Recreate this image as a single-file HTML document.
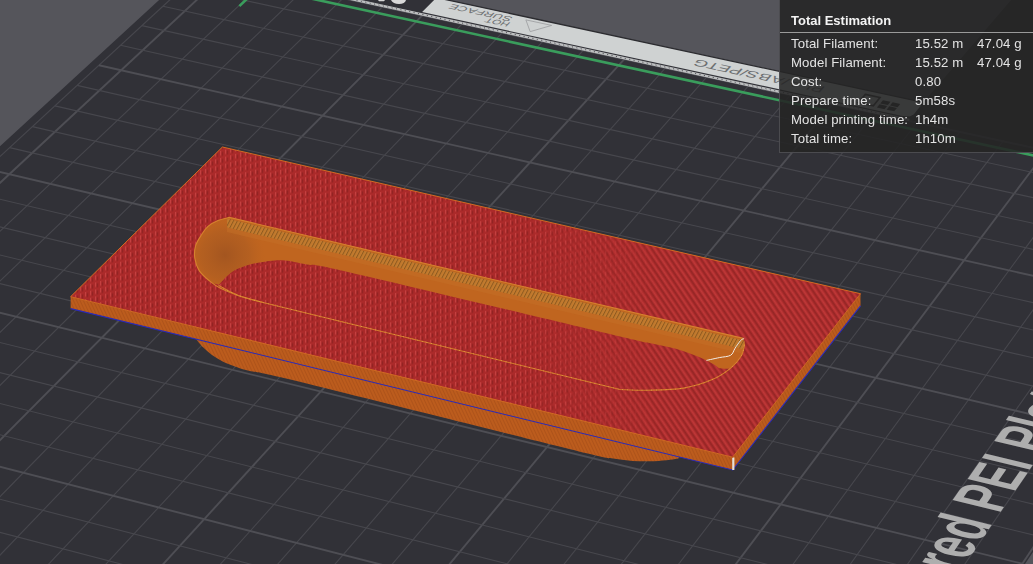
<!DOCTYPE html>
<html><head><meta charset="utf-8"><style>
html,body{margin:0;padding:0;width:1033px;height:564px;overflow:hidden;background:#55555b;}
svg{position:absolute;left:0;top:0;}
#panel{will-change:transform;position:absolute;left:779px;top:0;width:254px;height:153px;box-sizing:border-box;border-left:1px solid rgba(80,80,84,0.9);border-bottom:1px solid rgba(80,80,84,0.9);background:rgba(36,36,36,0.88);font-family:"Liberation Sans",sans-serif;color:#e4e4e4;}
#panel div{position:absolute;white-space:nowrap;font-size:13.2px;letter-spacing:0.1px;}
#panel .t{left:11px;top:12.8px;font-weight:bold;color:#f4f4f4;letter-spacing:0px;font-size:13px;}
#panel .sep{left:0;top:32px;width:253px;height:1px;background:#9a9a9a;}
#panel .r{left:11px;}
#panel .c2{left:135px;}
#panel .c3{left:197px;}
</style></head><body>
<svg width="1033" height="564" viewBox="0 0 1033 564">
<defs><clipPath id="pc"><polygon points="387.69,-210.14 600.69,-167.34 436.53,-2.40 923.43,102.35 1073.13,-72.40 1406.19,-5.47 716.48,1024.91 -562.13,662.98"/></clipPath><pattern id="red" width="5" height="7" patternUnits="userSpaceOnUse" patternTransform="skewY(-15)"><rect width="5" height="7" fill="#ab2a2a"/><rect x="0" y="0" width="1" height="4.5" fill="#c64242"/><rect x="2" y="1.5" width="1" height="4" fill="#821d1d"/></pattern><pattern id="red2" width="5" height="5" patternUnits="userSpaceOnUse" patternTransform="rotate(56)"><rect width="5" height="5" fill="#a82a2a"/><rect y="0.5" width="5" height="1.8" fill="#bf3838"/><rect y="3.4" width="5" height="0.9" fill="#8a2222"/></pattern><linearGradient id="mg" gradientUnits="userSpaceOnUse" x1="520" y1="0" x2="660" y2="0"><stop offset="0" stop-color="#fff" stop-opacity="0"/><stop offset="1" stop-color="#fff" stop-opacity="1"/></linearGradient><mask id="rm" maskUnits="userSpaceOnUse" x="0" y="0" width="1033" height="564"><rect width="1033" height="564" fill="url(#mg)"/></mask><pattern id="org" width="3" height="3" patternUnits="userSpaceOnUse" patternTransform="rotate(65)"><rect width="3" height="3" fill="#bc5c1d"/><rect width="3" height="1" fill="#ae531a"/></pattern><linearGradient id="wallg" x1="0" y1="0" x2="0" y2="1"><stop offset="0" stop-color="#c06a24"/><stop offset="1" stop-color="#bd6220"/></linearGradient><radialGradient id="lend" gradientUnits="userSpaceOnUse" cx="225" cy="255" r="40"><stop offset="0" stop-color="#9a5020" stop-opacity="0.75"/><stop offset="0.6" stop-color="#a85a22" stop-opacity="0.5"/><stop offset="1" stop-color="#b86020" stop-opacity="0"/></radialGradient><clipPath id="wallclip"><path d="M218.70,284.80 C217.22,284.20 213.05,283.57 209.80,281.20 C206.55,278.83 201.70,274.43 199.20,270.60 C196.70,266.77 195.40,262.33 194.80,258.20 C194.20,254.07 194.45,249.75 195.60,245.80 C196.75,241.85 199.63,237.75 201.70,234.50 C203.77,231.25 205.28,228.63 208.00,226.30 C210.72,223.97 214.45,221.98 218.00,220.50 C221.55,219.02 227.42,217.92 229.30,217.40 L743.4,338.4 C743.60,339.33 744.92,341.15 744.60,344.00 C744.28,346.85 743.77,351.53 741.50,355.50 C739.23,359.47 734.70,365.68 731.00,367.80 C727.30,369.92 721.25,368.13 719.30,368.20 L719.30,368.20  C717.17,366.90 713.60,363.58 706.50,360.40 C699.40,357.22 686.38,352.05 676.70,349.10 C667.02,346.15 657.85,344.80 648.40,342.70 C638.95,340.60 669.73,348.22 620.00,336.50 C570.27,324.78 402.17,284.38 350.00,272.40 C297.83,260.42 317.83,266.58 307.00,264.60 C296.17,262.62 292.03,260.98 285.00,260.50 C277.97,260.02 271.13,260.90 264.80,261.70 C258.47,262.50 252.62,263.52 247.00,265.30 C241.38,267.08 235.82,269.15 231.10,272.40 C226.38,275.65 220.77,282.73 218.70,284.80Z"/></clipPath><pattern id="hatch" width="3.4" height="3.4" patternUnits="userSpaceOnUse" patternTransform="rotate(-62)"><rect width="3.4" height="3.4" fill="#c27a2e"/><rect y="0" width="3.4" height="1" fill="#6a4418" fill-opacity="0.6"/></pattern><linearGradient id="bandg" gradientUnits="userSpaceOnUse" x1="0" y1="0" x2="0" y2="1"><stop offset="0" stop-color="#c6802e"/><stop offset="1" stop-color="#c06624"/></linearGradient></defs>
<polygon points="387.69,-210.14 600.69,-167.34 436.53,-2.40 923.43,102.35 1073.13,-72.40 1406.19,-5.47 716.48,1024.91 -562.13,662.98" fill="#313137"/>
<g clip-path="url(#pc)"><line x1="205.05" y1="-32.61" x2="-373.49" y2="500.97" stroke="#47474d" stroke-width="1.2" /><line x1="226.70" y1="-27.93" x2="-348.99" y2="507.50" stroke="#4e4e54" stroke-width="1.9" /><line x1="265.52" y1="-19.52" x2="-305.01" y2="519.23" stroke="#47474d" stroke-width="1.1" /><line x1="304.56" y1="-11.06" x2="-260.73" y2="531.04" stroke="#47474d" stroke-width="1.1" /><line x1="343.82" y1="-2.56" x2="-216.16" y2="542.93" stroke="#47474d" stroke-width="1.1" /><line x1="383.30" y1="5.99" x2="-171.28" y2="554.89" stroke="#47474d" stroke-width="1.1" /><line x1="423.01" y1="14.59" x2="-126.10" y2="566.94" stroke="#4e4e54" stroke-width="1.9" /><line x1="462.95" y1="23.24" x2="-80.62" y2="579.07" stroke="#47474d" stroke-width="1.1" /><line x1="503.12" y1="31.94" x2="-34.82" y2="591.29" stroke="#47474d" stroke-width="1.1" /><line x1="543.52" y1="40.69" x2="11.29" y2="603.58" stroke="#47474d" stroke-width="1.1" /><line x1="584.15" y1="49.49" x2="57.71" y2="615.96" stroke="#47474d" stroke-width="1.1" /><line x1="625.02" y1="58.34" x2="104.46" y2="628.43" stroke="#4e4e54" stroke-width="1.9" /><line x1="666.12" y1="67.24" x2="151.53" y2="640.98" stroke="#47474d" stroke-width="1.1" /><line x1="707.47" y1="76.19" x2="198.92" y2="653.62" stroke="#47474d" stroke-width="1.1" /><line x1="749.06" y1="85.20" x2="246.65" y2="666.35" stroke="#47474d" stroke-width="1.1" /><line x1="790.89" y1="94.26" x2="294.70" y2="679.16" stroke="#47474d" stroke-width="1.1" /><line x1="832.96" y1="103.37" x2="343.10" y2="692.07" stroke="#4e4e54" stroke-width="1.9" /><line x1="875.29" y1="112.53" x2="391.83" y2="705.07" stroke="#47474d" stroke-width="1.1" /><line x1="917.86" y1="121.76" x2="440.91" y2="718.15" stroke="#47474d" stroke-width="1.1" /><line x1="960.69" y1="131.03" x2="490.34" y2="731.33" stroke="#47474d" stroke-width="1.1" /><line x1="1003.77" y1="140.36" x2="540.11" y2="744.61" stroke="#47474d" stroke-width="1.1" /><line x1="1047.11" y1="149.75" x2="590.24" y2="757.98" stroke="#4e4e54" stroke-width="1.9" /><line x1="1090.71" y1="159.19" x2="640.74" y2="771.44" stroke="#47474d" stroke-width="1.1" /><line x1="1134.57" y1="168.69" x2="691.59" y2="785.01" stroke="#47474d" stroke-width="1.1" /><line x1="1178.70" y1="178.24" x2="742.81" y2="798.66" stroke="#47474d" stroke-width="1.1" /><line x1="1223.09" y1="187.86" x2="794.40" y2="812.42" stroke="#47474d" stroke-width="1.1" /><line x1="1267.75" y1="197.53" x2="846.36" y2="826.28" stroke="#4e4e54" stroke-width="1.9" /><line x1="204.24" y1="-31.86" x2="1267.16" y2="198.40" stroke="#4e4e54" stroke-width="1.9" /><line x1="183.73" y1="-12.95" x2="1252.43" y2="220.39" stroke="#47474d" stroke-width="1.1" /><line x1="162.95" y1="6.21" x2="1237.49" y2="242.68" stroke="#47474d" stroke-width="1.1" /><line x1="141.91" y1="25.62" x2="1222.33" y2="265.29" stroke="#47474d" stroke-width="1.1" /><line x1="120.58" y1="45.29" x2="1206.97" y2="288.22" stroke="#47474d" stroke-width="1.1" /><line x1="98.98" y1="65.21" x2="1191.38" y2="311.48" stroke="#4e4e54" stroke-width="1.9" /><line x1="77.09" y1="85.40" x2="1175.57" y2="335.07" stroke="#47474d" stroke-width="1.1" /><line x1="54.90" y1="105.86" x2="1159.53" y2="359.00" stroke="#47474d" stroke-width="1.1" /><line x1="32.42" y1="126.60" x2="1143.26" y2="383.28" stroke="#47474d" stroke-width="1.1" /><line x1="9.63" y1="147.62" x2="1126.75" y2="407.92" stroke="#47474d" stroke-width="1.1" /><line x1="-13.47" y1="168.92" x2="1109.99" y2="432.92" stroke="#4e4e54" stroke-width="1.9" /><line x1="-36.88" y1="190.52" x2="1092.98" y2="458.29" stroke="#47474d" stroke-width="1.1" /><line x1="-60.62" y1="212.41" x2="1075.72" y2="484.05" stroke="#47474d" stroke-width="1.1" /><line x1="-84.70" y1="234.62" x2="1058.20" y2="510.20" stroke="#47474d" stroke-width="1.1" /><line x1="-109.11" y1="257.13" x2="1040.41" y2="536.74" stroke="#47474d" stroke-width="1.1" /><line x1="-133.86" y1="279.96" x2="1022.35" y2="563.69" stroke="#4e4e54" stroke-width="1.9" /><line x1="-158.97" y1="303.12" x2="1004.01" y2="591.06" stroke="#47474d" stroke-width="1.1" /><line x1="-184.44" y1="326.61" x2="985.38" y2="618.86" stroke="#47474d" stroke-width="1.1" /><line x1="-210.28" y1="350.44" x2="966.45" y2="647.09" stroke="#47474d" stroke-width="1.1" /><line x1="-236.49" y1="374.61" x2="947.23" y2="675.77" stroke="#47474d" stroke-width="1.1" /><line x1="-263.09" y1="399.14" x2="927.70" y2="704.91" stroke="#4e4e54" stroke-width="1.9" /><line x1="-290.08" y1="424.03" x2="907.86" y2="734.52" stroke="#47474d" stroke-width="1.1" /><line x1="-317.47" y1="449.30" x2="887.69" y2="764.61" stroke="#47474d" stroke-width="1.1" /><line x1="-345.27" y1="474.94" x2="867.20" y2="795.19" stroke="#47474d" stroke-width="1.1" /></g>
<line x1="239.38" y1="6.08" x2="259.86" y2="-13.27" stroke="#3a9d5c" stroke-width="2.6" />
<line x1="259.26" y1="-12.70" x2="1968.07" y2="358.38" stroke="#3a9d5c" stroke-width="2.6" />
<polygon points="436.53,-2.40 914.94,100.52 920.64,102.71 920.29,106.26 913.66,114.51 909.53,116.54 902.47,115.99 422.15,12.05" fill="#cfd2d2"/>
<line x1="436.53" y1="-2.40" x2="923.43" y2="102.35" stroke="#2c2c30" stroke-width="1.3" />
<polygon points="882.92,100.13 890.54,101.78 887.86,105.06 880.24,103.42" fill="#2a2a2a"/>
<polygon points="892.65,102.23 900.28,103.88 897.62,107.17 889.98,105.52" fill="#2a2a2a"/>
<polygon points="879.56,104.24 887.19,105.89 884.51,109.18 876.87,107.53" fill="#2a2a2a"/>
<polygon points="889.31,106.35 896.95,107.99 894.27,111.30 886.63,109.64" fill="#2a2a2a"/>
<polygon points="865.26,94.40 880.03,97.58 873.31,105.80 858.50,102.59" fill="none" stroke="#333" stroke-width="1.6"/>
<line x1="149.71" y1="-44.60" x2="909.33" y2="119.91" stroke="#bdbfc0" stroke-width="2.4" />
<line x1="149.71" y1="-44.60" x2="909.33" y2="119.91" stroke="#505055" stroke-width="1.0" stroke-dasharray="1.1 3.4"/>
<path d="M391,0 L406,0 Q405,4 399,4 Q393,4 391,0Z" fill="#d8d8d8"/>
<path d="M378,0 L385,0 L384,1.2 L379,1.2Z" fill="#d8d8d8"/>
<g clip-path="url(#pc)"><text transform="matrix(0.2402,-0.3458,0.7240,0.1836,895.92,664.32)" font-size="100" font-family="Liberation Sans" font-weight="bold" fill="#aeaeae" opacity="1">T</text><text transform="matrix(0.2375,-0.3420,0.7207,0.1816,910.47,643.13)" font-size="100" font-family="Liberation Sans" font-weight="bold" fill="#aeaeae" opacity="1">e</text><text transform="matrix(0.2351,-0.3384,0.7175,0.1797,923.57,624.04)" font-size="100" font-family="Liberation Sans" font-weight="bold" fill="#aeaeae" opacity="1">x</text><text transform="matrix(0.2331,-0.3356,0.7150,0.1782,936.55,605.18)" font-size="100" font-family="Liberation Sans" font-weight="bold" fill="#aeaeae" opacity="1">t</text><text transform="matrix(0.2310,-0.3326,0.7124,0.1767,944.23,593.93)" font-size="100" font-family="Liberation Sans" font-weight="bold" fill="#aeaeae" opacity="1">u</text><text transform="matrix(0.2289,-0.3295,0.7097,0.1750,958.24,573.57)" font-size="100" font-family="Liberation Sans" font-weight="bold" fill="#aeaeae" opacity="1">r</text><text transform="matrix(0.2269,-0.3266,0.7071,0.1735,967.06,560.69)" font-size="100" font-family="Liberation Sans" font-weight="bold" fill="#aeaeae" opacity="1">e</text><text transform="matrix(0.2244,-0.3231,0.7039,0.1717,979.57,542.45)" font-size="100" font-family="Liberation Sans" font-weight="bold" fill="#aeaeae" opacity="1">d</text><text transform="matrix(0.2207,-0.3177,0.6990,0.1688,999.30,513.70)" font-size="100" font-family="Liberation Sans" font-weight="bold" fill="#aeaeae" opacity="1">P</text><text transform="matrix(0.2180,-0.3139,0.6954,0.1668,1013.90,492.44)" font-size="100" font-family="Liberation Sans" font-weight="bold" fill="#aeaeae" opacity="1">E</text><text transform="matrix(0.2161,-0.3112,0.6929,0.1653,1028.33,471.48)" font-size="100" font-family="Liberation Sans" font-weight="bold" fill="#aeaeae" opacity="1">I</text><text transform="matrix(0.2132,-0.3070,0.6890,0.1631,1040.20,454.13)" font-size="100" font-family="Liberation Sans" font-weight="bold" fill="#aeaeae" opacity="1">P</text><text transform="matrix(0.2114,-0.3044,0.6866,0.1618,1054.32,433.63)" font-size="100" font-family="Liberation Sans" font-weight="bold" fill="#aeaeae" opacity="1">l</text><text transform="matrix(0.2099,-0.3021,0.6844,0.1606,1060.13,425.11)" font-size="100" font-family="Liberation Sans" font-weight="bold" fill="#aeaeae" opacity="1">a</text><text transform="matrix(0.2082,-0.2997,0.6822,0.1593,1071.71,408.28)" font-size="100" font-family="Liberation Sans" font-weight="bold" fill="#aeaeae" opacity="1">t</text><text transform="matrix(0.2066,-0.2974,0.6799,0.1580,1078.57,398.24)" font-size="100" font-family="Liberation Sans" font-weight="bold" fill="#aeaeae" opacity="1">e</text></g>
<text transform="matrix(-0.1109,-0.0240,0.0564,-0.0585,510.97,22.77)" font-size="100" font-family="Liberation Sans" font-weight="normal" fill="#6c6e70" opacity="1">H</text>
<text transform="matrix(-0.1108,-0.0239,0.0565,-0.0585,502.96,21.04)" font-size="100" font-family="Liberation Sans" font-weight="normal" fill="#6c6e70" opacity="1">O</text>
<text transform="matrix(-0.1106,-0.0239,0.0566,-0.0584,494.35,19.18)" font-size="100" font-family="Liberation Sans" font-weight="normal" fill="#6c6e70" opacity="1">T</text>
<text transform="matrix(-0.1284,-0.0277,0.0600,-0.0622,513.43,17.19)" font-size="100" font-family="Liberation Sans" font-weight="normal" fill="#6c6e70" opacity="1">S</text>
<text transform="matrix(-0.1282,-0.0276,0.0602,-0.0621,504.87,15.35)" font-size="100" font-family="Liberation Sans" font-weight="normal" fill="#6c6e70" opacity="1">U</text>
<text transform="matrix(-0.1280,-0.0276,0.0603,-0.0620,495.62,13.35)" font-size="100" font-family="Liberation Sans" font-weight="normal" fill="#6c6e70" opacity="1">R</text>
<text transform="matrix(-0.1279,-0.0276,0.0604,-0.0620,486.38,11.36)" font-size="100" font-family="Liberation Sans" font-weight="normal" fill="#6c6e70" opacity="1">F</text>
<text transform="matrix(-0.1277,-0.0275,0.0606,-0.0619,478.57,9.68)" font-size="100" font-family="Liberation Sans" font-weight="normal" fill="#6c6e70" opacity="1">A</text>
<text transform="matrix(-0.1275,-0.0275,0.0607,-0.0618,469.35,7.70)" font-size="100" font-family="Liberation Sans" font-weight="normal" fill="#6c6e70" opacity="1">C</text>
<text transform="matrix(-0.1274,-0.0275,0.0609,-0.0617,460.15,5.71)" font-size="100" font-family="Liberation Sans" font-weight="normal" fill="#6c6e70" opacity="1">E</text>
<text transform="matrix(-0.1762,-0.0380,0.0719,-0.0855,825.88,86.88)" font-size="100" font-family="Liberation Sans" font-weight="normal" fill="#6c6e70" opacity="1">P</text>
<text transform="matrix(-0.1759,-0.0380,0.0722,-0.0854,814.14,84.34)" font-size="100" font-family="Liberation Sans" font-weight="normal" fill="#6c6e70" opacity="1">L</text>
<text transform="matrix(-0.1756,-0.0379,0.0724,-0.0852,803.40,82.03)" font-size="100" font-family="Liberation Sans" font-weight="normal" fill="#6c6e70" opacity="1">A</text>
<text transform="matrix(-0.1754,-0.0378,0.0726,-0.0851,790.73,79.30)" font-size="100" font-family="Liberation Sans" font-weight="normal" fill="#6c6e70" opacity="1">/</text>
<text transform="matrix(-0.1752,-0.0378,0.0728,-0.0850,785.86,78.25)" font-size="100" font-family="Liberation Sans" font-weight="normal" fill="#6c6e70" opacity="1">A</text>
<text transform="matrix(-0.1749,-0.0377,0.0731,-0.0849,773.22,75.52)" font-size="100" font-family="Liberation Sans" font-weight="normal" fill="#6c6e70" opacity="1">B</text>
<text transform="matrix(-0.1746,-0.0377,0.0734,-0.0847,760.60,72.80)" font-size="100" font-family="Liberation Sans" font-weight="normal" fill="#6c6e70" opacity="1">S</text>
<text transform="matrix(-0.1744,-0.0376,0.0736,-0.0846,748.96,70.30)" font-size="100" font-family="Liberation Sans" font-weight="normal" fill="#6c6e70" opacity="1">/</text>
<text transform="matrix(-0.1742,-0.0376,0.0738,-0.0845,744.12,69.25)" font-size="100" font-family="Liberation Sans" font-weight="normal" fill="#6c6e70" opacity="1">P</text>
<text transform="matrix(-0.1739,-0.0375,0.0740,-0.0844,732.51,66.75)" font-size="100" font-family="Liberation Sans" font-weight="normal" fill="#6c6e70" opacity="1">E</text>
<text transform="matrix(-0.1736,-0.0375,0.0743,-0.0842,720.92,64.25)" font-size="100" font-family="Liberation Sans" font-weight="normal" fill="#6c6e70" opacity="1">T</text>
<text transform="matrix(-0.1733,-0.0374,0.0746,-0.0841,710.32,61.97)" font-size="100" font-family="Liberation Sans" font-weight="normal" fill="#6c6e70" opacity="1">G</text>
<polygon points="525.87,19.87 551.64,25.42 530.18,31.64" fill="none" stroke="#9a9c9e" stroke-width="0.8"/>
<path d="M196.70,339.90 C197.77,341.13 200.62,344.82 203.10,347.30 C205.58,349.78 208.42,352.48 211.60,354.80 C214.78,357.12 218.30,359.25 222.20,361.20 C226.10,363.15 230.57,364.92 235.00,366.50 C239.43,368.08 240.47,368.75 248.80,370.70 C257.13,372.65 253.13,370.53 285.00,378.20 C316.87,385.87 389.17,404.07 440.00,416.70 C490.83,429.33 561.45,447.08 590.00,454.00 C618.55,460.92 604.20,457.05 611.30,458.20 C618.40,459.35 625.50,460.40 632.60,460.90 C639.70,461.40 647.68,461.38 653.90,461.20 C660.12,461.02 665.82,460.25 669.90,459.80 C673.98,459.35 676.98,458.72 678.40,458.50 L700,400 L190,300Z" fill="url(#org)"/>
<polygon points="70.60,296.70 732.70,457.20 732.70,470.00 70.60,308.60" fill="url(#org)"/>
<polygon points="732.70,457.20 860.50,293.70 860.50,305.90 732.70,470.00" fill="url(#org)"/>
<polyline points="70.60,308.60 732.70,470.00 860.50,305.90" fill="none" stroke="#2a2ab8" stroke-width="1.1"/>
<line x1="733.3" y1="457.5" x2="733.3" y2="470" stroke="#e8e0d8" stroke-width="2.2"/>
<polygon points="222.40,147.00 860.50,293.70 732.70,457.20 70.60,296.70" fill="url(#red)"/>
<polygon points="222.40,147.00 860.50,293.70 732.70,457.20 70.60,296.70" fill="url(#red2)" mask="url(#rm)"/>
<polyline points="70.60,296.70 222.40,147.00 860.50,293.70 732.70,457.20 70.60,296.70" fill="none" stroke="#d06a22" stroke-width="1"/>
<path d="M263.00,302.50 C258.87,301.32 245.28,297.77 238.20,295.40 C231.12,293.03 225.23,290.67 220.50,288.30 C215.77,285.93 213.35,284.15 209.80,281.20 C206.25,278.25 201.70,274.43 199.20,270.60 C196.70,266.77 195.40,262.33 194.80,258.20 C194.20,254.07 194.45,249.75 195.60,245.80 C196.75,241.85 199.63,237.75 201.70,234.50 C203.77,231.25 205.28,228.63 208.00,226.30 C210.72,223.97 214.45,221.98 218.00,220.50 C221.55,219.02 227.42,217.92 229.30,217.40 L743.40,338.40 743.40,338.40 C743.60,339.33 744.92,341.15 744.60,344.00 C744.28,346.85 743.77,351.53 741.50,355.50 C739.23,359.47 735.88,363.78 731.00,367.80 C726.12,371.82 720.07,376.22 712.20,379.60 C704.33,382.98 694.43,386.33 683.80,388.10 C673.17,389.87 659.03,389.97 648.40,390.20 C637.77,390.43 624.73,389.62 620.00,389.50Z" fill="url(#red)"/>
<path d="M263.00,302.50 C258.87,301.32 245.28,297.77 238.20,295.40 C231.12,293.03 225.23,290.67 220.50,288.30 C215.77,285.93 213.35,284.15 209.80,281.20 C206.25,278.25 201.70,274.43 199.20,270.60 C196.70,266.77 195.40,262.33 194.80,258.20 C194.20,254.07 194.45,249.75 195.60,245.80 C196.75,241.85 199.63,237.75 201.70,234.50 C203.77,231.25 205.28,228.63 208.00,226.30 C210.72,223.97 214.45,221.98 218.00,220.50 C221.55,219.02 227.42,217.92 229.30,217.40 L743.40,338.40 743.40,338.40 C743.60,339.33 744.92,341.15 744.60,344.00 C744.28,346.85 743.77,351.53 741.50,355.50 C739.23,359.47 735.88,363.78 731.00,367.80 C726.12,371.82 720.07,376.22 712.20,379.60 C704.33,382.98 694.43,386.33 683.80,388.10 C673.17,389.87 659.03,389.97 648.40,390.20 C637.77,390.43 624.73,389.62 620.00,389.50Z" fill="url(#red2)" mask="url(#rm)"/>
<path d="M218.70,284.80 C217.22,284.20 213.05,283.57 209.80,281.20 C206.55,278.83 201.70,274.43 199.20,270.60 C196.70,266.77 195.40,262.33 194.80,258.20 C194.20,254.07 194.45,249.75 195.60,245.80 C196.75,241.85 199.63,237.75 201.70,234.50 C203.77,231.25 205.28,228.63 208.00,226.30 C210.72,223.97 214.45,221.98 218.00,220.50 C221.55,219.02 227.42,217.92 229.30,217.40 L743.4,338.4 C743.60,339.33 744.92,341.15 744.60,344.00 C744.28,346.85 743.77,351.53 741.50,355.50 C739.23,359.47 734.70,365.68 731.00,367.80 C727.30,369.92 721.25,368.13 719.30,368.20 L719.30,368.20  C717.17,366.90 713.60,363.58 706.50,360.40 C699.40,357.22 686.38,352.05 676.70,349.10 C667.02,346.15 657.85,344.80 648.40,342.70 C638.95,340.60 669.73,348.22 620.00,336.50 C570.27,324.78 402.17,284.38 350.00,272.40 C297.83,260.42 317.83,266.58 307.00,264.60 C296.17,262.62 292.03,260.98 285.00,260.50 C277.97,260.02 271.13,260.90 264.80,261.70 C258.47,262.50 252.62,263.52 247.00,265.30 C241.38,267.08 235.82,269.15 231.10,272.40 C226.38,275.65 220.77,282.73 218.70,284.80Z" fill="#c0651f"/>
<path d="M218.70,284.80 C217.22,284.20 213.05,283.57 209.80,281.20 C206.55,278.83 201.70,274.43 199.20,270.60 C196.70,266.77 195.40,262.33 194.80,258.20 C194.20,254.07 194.45,249.75 195.60,245.80 C196.75,241.85 199.63,237.75 201.70,234.50 C203.77,231.25 205.28,228.63 208.00,226.30 C210.72,223.97 214.45,221.98 218.00,220.50 C221.55,219.02 227.42,217.92 229.30,217.40 L743.4,338.4 C743.60,339.33 744.92,341.15 744.60,344.00 C744.28,346.85 743.77,351.53 741.50,355.50 C739.23,359.47 734.70,365.68 731.00,367.80 C727.30,369.92 721.25,368.13 719.30,368.20 L719.30,368.20  C717.17,366.90 713.60,363.58 706.50,360.40 C699.40,357.22 686.38,352.05 676.70,349.10 C667.02,346.15 657.85,344.80 648.40,342.70 C638.95,340.60 669.73,348.22 620.00,336.50 C570.27,324.78 402.17,284.38 350.00,272.40 C297.83,260.42 317.83,266.58 307.00,264.60 C296.17,262.62 292.03,260.98 285.00,260.50 C277.97,260.02 271.13,260.90 264.80,261.70 C258.47,262.50 252.62,263.52 247.00,265.30 C241.38,267.08 235.82,269.15 231.10,272.40 C226.38,275.65 220.77,282.73 218.70,284.80Z" fill="url(#lend)"/>
<g clip-path="url(#wallclip)">
<polygon points="227.00,218.56 746.00,340.88 746.00,349.88 227.00,227.56" fill="url(#hatch)"/>
<polygon points="227.00,227.56 746.00,349.88 746.00,354.38 227.00,232.06" fill="#c47028" opacity="0.5"/>
</g>
<path d="M263.00,302.50 C258.87,301.32 245.28,297.77 238.20,295.40 C231.12,293.03 225.23,290.67 220.50,288.30 C215.77,285.93 213.35,284.15 209.80,281.20 C206.25,278.25 201.70,274.43 199.20,270.60 C196.70,266.77 195.40,262.33 194.80,258.20 C194.20,254.07 194.45,249.75 195.60,245.80 C196.75,241.85 199.63,237.75 201.70,234.50 C203.77,231.25 205.28,228.63 208.00,226.30 C210.72,223.97 214.45,221.98 218.00,220.50 C221.55,219.02 227.42,217.92 229.30,217.40 L743.4,338.4" fill="none" stroke="#d5822e" stroke-width="1.1"/>
<path d="M218.70,285.50 C221.95,287.15 230.82,292.57 238.20,295.40 C245.58,298.23 258.87,301.32 263.00,302.50 L620.00,389.50 C624.73,389.62 637.77,390.43 648.40,390.20 C659.03,389.97 673.17,389.87 683.80,388.10 C694.43,386.33 704.33,382.98 712.20,379.60 C720.07,376.22 726.12,371.82 731.00,367.80 C735.88,363.78 739.23,359.47 741.50,355.50 C743.77,351.53 744.08,345.92 744.60,344.00" fill="none" stroke="#d47c2c" stroke-width="1.1"/>
<path d="M218.70,285.50 C221.95,287.15 230.82,292.57 238.20,295.40 C245.58,298.23 258.87,301.32 263.00,302.50 L620.00,389.50 C624.73,389.62 637.77,390.43 648.40,390.20 C659.03,389.97 673.17,389.87 683.80,388.10 C694.43,386.33 704.33,382.98 712.20,379.60 C720.07,376.22 726.12,371.82 731.00,367.80 C735.88,363.78 739.23,359.47 741.50,355.50 C743.77,351.53 744.08,345.92 744.60,344.00" fill="none" stroke="#f0c060" stroke-width="0.8" stroke-dasharray="0.8 4" stroke-opacity="0.7"/>
<path d="M706.50,360.40 C708.63,359.93 715.28,358.45 719.30,357.60 C723.32,356.75 727.98,356.83 730.60,355.30 C733.22,353.77 733.33,350.87 735.00,348.40 C736.67,345.93 739.08,342.13 740.60,340.50 C742.12,338.87 743.52,338.92 744.10,338.60" fill="none" stroke="#f2ece6" stroke-width="1"/>
</svg>
<div id="panel">
<div class="t">Total Estimation</div>
<div class="sep"></div>
<div class="r" style="top:36px">Total Filament:</div><div class="c2" style="top:36px">15.52 m</div><div class="c3" style="top:36px">47.04 g</div>
<div class="r" style="top:55px">Model Filament:</div><div class="c2" style="top:55px">15.52 m</div><div class="c3" style="top:55px">47.04 g</div>
<div class="r" style="top:73.8px">Cost:</div><div class="c2" style="top:73.8px">0.80</div>
<div class="r" style="top:92.8px">Prepare time:</div><div class="c2" style="top:92.8px">5m58s</div>
<div class="r" style="top:111.8px">Model printing time:</div><div class="c2" style="top:111.8px">1h4m</div>
<div class="r" style="top:130.8px">Total time:</div><div class="c2" style="top:130.8px">1h10m</div>
</div>
</body></html>
